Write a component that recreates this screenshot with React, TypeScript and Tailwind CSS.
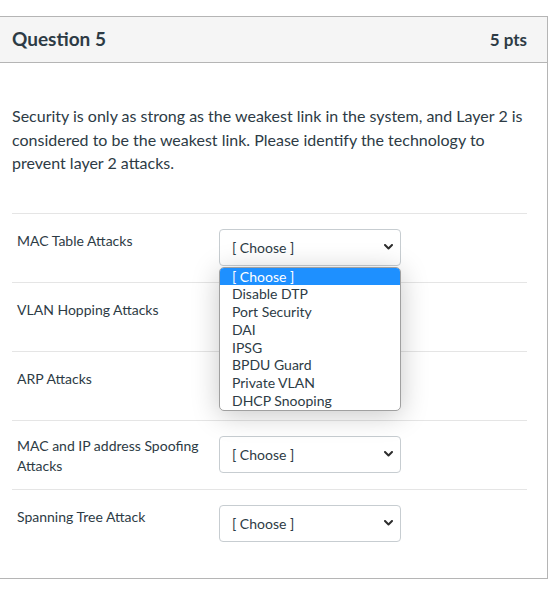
import React from "react";

const options = [
  "[ Choose ]",
  "Disable DTP",
  "Port Security",
  "DAI",
  "IPSG",
  "BPDU Guard",
  "Private VLAN",
  "DHCP Snooping",
];

function Chevron() {
  return (
    <svg width="9" height="6" viewBox="0 0 9 6" className="absolute right-[8px] top-1/2 -translate-y-1/2">
      <polyline points="1,1 4.5,4.5 8,1" fill="none" stroke="#2d2d2d" strokeWidth="2" strokeLinecap="round" strokeLinejoin="round" />
    </svg>
  );
}

function SelectBox({ open }: { open?: boolean }) {
  return (
    <div className="relative w-[182px] h-[37px] shrink-0">
      <div className="w-full h-full border border-[#c7cdd1] rounded-[4px] bg-white flex items-center pl-[12px] text-[14px] text-[#2d3b45]">
        [ Choose ]
      </div>
      <Chevron />
      {open && (
        <div className="absolute left-0 top-[38px] w-[182px] z-10 bg-white border border-[#a0a0a0] rounded-[5px] overflow-hidden shadow-[0_4px_28px_rgba(0,0,0,0.22)]">
          {options.map((o, i) => (
            <div
              key={o}
              className={
                i === 0
                  ? "h-[17.75px] leading-[17.75px] pl-[12px] text-[14px] bg-[#1e90ff] text-white"
                  : "h-[17.75px] leading-[17.75px] pl-[12px] text-[14px] text-[#2d3b45]"
              }
            >
              {o}
            </div>
          ))}
        </div>
      )}
    </div>
  );
}

function Row({ label, open, labelPt }: { label: string; open?: boolean; labelPt?: string }) {
  return (
    <div className="flex h-[69px] border-t border-[#e5e5e5] pt-[15px]">
      <div className={"w-[207px] pl-[5px] pr-[12px] text-[14px] leading-[20px] text-[#2d3b45] " + (labelPt ?? "pt-[2px]")}>
        {label}
      </div>
      <SelectBox open={open} />
    </div>
  );
}

export default function App() {
  return (
    <div className="w-[553px] h-[597px] bg-white font-['Lato',sans-serif] text-[#2d3b45] pt-[16px]">
      <div className="w-[548px] border-t border-r border-b border-[#b5b5b5]">
        <div className="h-[46px] bg-[#f5f5f5] border-b border-[#b5b5b5] flex items-center justify-between pl-[12px] pr-[20px]">
          <div className="text-[19px] font-bold text-[#2d3b45]">Question 5</div>
          <div className="text-[17px] font-bold text-[#2d3b45]">5 pts</div>
        </div>
        <div className="pl-[12px] pr-[20px] pt-[41px] pb-[20px]">
          <p className="text-[16px] leading-[23.5px] text-[#2d3b45] pr-[2px]">
            Security is only as strong as the weakest link in the system, and Layer 2 is considered to be the weakest
            link. Please identify the technology to prevent layer 2 attacks.
          </p>
          <div className="mt-[38px] w-[515px]">
            <Row label="MAC Table Attacks" open />
            <Row label="VLAN Hopping Attacks" />
            <Row label="ARP Attacks" />
            <Row label="MAC and IP address Spoofing Attacks" labelPt="pt-0" />
            <Row label="Spanning Tree Attack" />
          </div>
        </div>
      </div>
    </div>
  );
}
